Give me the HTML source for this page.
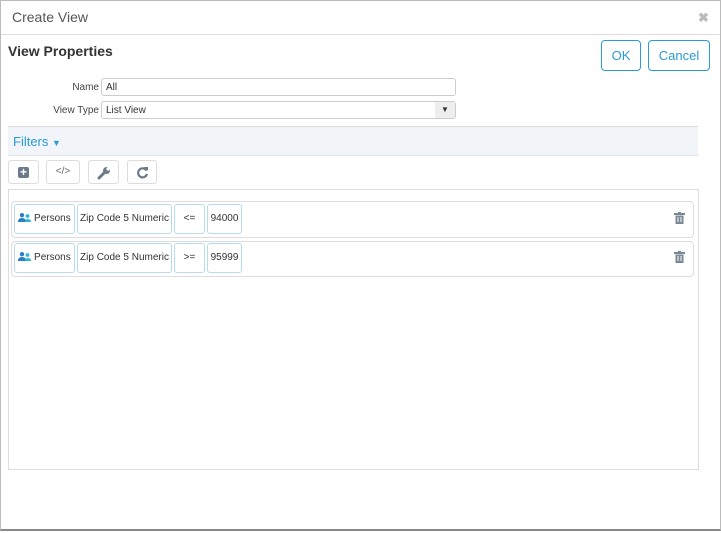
<html><head><style>
body{margin:0;width:721px;height:533px;overflow:hidden;background:#fff;font-family:"Liberation Sans",sans-serif;position:relative}
.a{position:absolute;box-sizing:border-box}
.chip{position:absolute;box-sizing:border-box;border:1px solid #b9dcec;border-radius:3px;height:30px;font-size:10px;color:#333;line-height:28px;text-align:center}
.tb{position:absolute;box-sizing:border-box;border:1px solid #ddd;border-radius:3px;top:160px;height:24px;background:#fff}
.lab{position:absolute;font-size:10px;color:#444;text-align:right;width:90px;left:9px}
.inp{position:absolute;box-sizing:border-box;left:101px;width:355px;height:18px;border:1px solid #ccc;border-radius:3px;font-size:10px;color:#333;padding-left:4px;line-height:18px}
</style></head><body>
<div class="a" style="left:0;top:0;width:721px;height:531px;border:1px solid #bbb;border-bottom:2px solid #888"></div>
<div class="a" style="left:1px;top:34px;width:719px;height:1px;background:#ddd"></div>
<div class="a" style="left:12px;top:9px;font-size:14px;color:#555">Create View</div>
<div class="a" style="left:698px;top:10px;font-size:13px;color:#bbb;font-weight:bold">✖</div>
<div class="a" style="left:8px;top:43px;font-size:14px;font-weight:bold;color:#333">View Properties</div>
<div class="a" style="left:601px;top:40px;width:40px;height:31px;border:1px solid #2a9bd6;border-radius:4px;color:#2a9bd6;font-size:13px;text-align:center;line-height:29px">OK</div>
<div class="a" style="left:648px;top:40px;width:62px;height:31px;border:1px solid #2a9bd6;border-radius:4px;color:#2a9bd6;font-size:13px;text-align:center;line-height:29px">Cancel</div>
<div class="lab" style="top:82px">Name</div>
<div class="inp" style="top:78px">All</div>
<div class="lab" style="top:105px">View Type</div>
<div class="inp" style="top:101px">List View<span style="position:absolute;right:0;top:0;width:20px;height:16px;background:#eee;font-size:8px;text-align:center;line-height:16px">▼</span></div>
<div class="a" style="left:8px;top:126px;width:690px;height:30px;background:#f1f4f9;border-top:1px solid #ddd;border-bottom:1px solid #e5e5e5"></div>
<div class="a" style="left:13px;top:134px;font-size:13px;color:#2a9bd6">Filters <span style="font-size:9px">▼</span></div>
<div class="tb" style="left:8px;width:31px"><div class="a" style="left:9px;top:6px;width:11px;height:11px;background:#6c7a89;border-radius:2px;color:#fff;font-size:12px;line-height:10px;text-align:center;font-weight:bold">+</div></div>
<div class="tb" style="left:46px;width:34px;font-size:10px;color:#666;text-align:center;line-height:22px">&lt;/&gt;</div>
<div class="tb" style="left:88px;width:31px"><svg class="a" style="left:8px;top:5px" width="14" height="14" viewBox="0 0 14 14"><path d="M2 12 L8 6" stroke="#6c7a89" stroke-width="3" stroke-linecap="round"/><circle cx="9.5" cy="4.5" r="3.5" fill="#6c7a89"/><circle cx="11" cy="3" r="1.6" fill="#fff"/></svg></div>
<div class="tb" style="left:127px;width:30px"><svg class="a" style="left:8px;top:5px" width="13" height="13" viewBox="0 0 13 13"><path d="M10.5 4.5 A4.5 4.5 0 1 0 11 8" fill="none" stroke="#6c7a89" stroke-width="2.2"/><path d="M8 1 L12 1 L12 5 Z" fill="#6c7a89"/></svg></div>
<div class="a" style="left:8px;top:189px;width:691px;height:281px;border:1px solid #ddd"></div>
<div class="a" style="left:11px;top:201px;width:683px;height:37px;border:1px solid #ddd;border-radius:4px"></div>
<div class="a" style="left:11px;top:241px;width:683px;height:36px;border:1px solid #ddd;border-radius:4px"></div>
<div class="chip" style="left:14px;top:204px;width:61px"><svg width="13" height="9" viewBox="0 0 13 9" style="vertical-align:-1px"><circle cx="4" cy="2.2" r="2.2" fill="#2a7fc4"/><path d="M0 9 Q0 5 4 5 Q8 5 8 9Z" fill="#2a7fc4"/><circle cx="9.5" cy="3" r="1.9" fill="#2fb5d8"/><path d="M7 9 Q7 6 9.5 6 Q13 6 13 9Z" fill="#2fb5d8"/></svg> Persons</div>
<div class="chip" style="left:77px;top:204px;width:95px">Zip Code 5 Numeric</div>
<div class="chip" style="left:174px;top:204px;width:31px">&lt;=</div>
<div class="chip" style="left:207px;top:204px;width:35px">94000</div>
<div class="chip" style="left:14px;top:243px;width:61px"><svg width="13" height="9" viewBox="0 0 13 9" style="vertical-align:-1px"><circle cx="4" cy="2.2" r="2.2" fill="#2a7fc4"/><path d="M0 9 Q0 5 4 5 Q8 5 8 9Z" fill="#2a7fc4"/><circle cx="9.5" cy="3" r="1.9" fill="#2fb5d8"/><path d="M7 9 Q7 6 9.5 6 Q13 6 13 9Z" fill="#2fb5d8"/></svg> Persons</div>
<div class="chip" style="left:77px;top:243px;width:95px">Zip Code 5 Numeric</div>
<div class="chip" style="left:174px;top:243px;width:31px">&gt;=</div>
<div class="chip" style="left:207px;top:243px;width:35px">95999</div>
<svg class="a" style="left:674px;top:212px" width="11" height="12" viewBox="0 0 11 12"><rect x="0" y="1" width="11" height="2" fill="#7a8896"/><rect x="4" y="0" width="3" height="2" fill="#7a8896"/><rect x="1.5" y="3.5" width="8" height="8.5" fill="#7a8896"/><path d="M4 5v5M7 5v5" stroke="#fff"/></svg>
<svg class="a" style="left:674px;top:251px" width="11" height="12" viewBox="0 0 11 12"><rect x="0" y="1" width="11" height="2" fill="#7a8896"/><rect x="4" y="0" width="3" height="2" fill="#7a8896"/><rect x="1.5" y="3.5" width="8" height="8.5" fill="#7a8896"/><path d="M4 5v5M7 5v5" stroke="#fff"/></svg>
</body></html>
